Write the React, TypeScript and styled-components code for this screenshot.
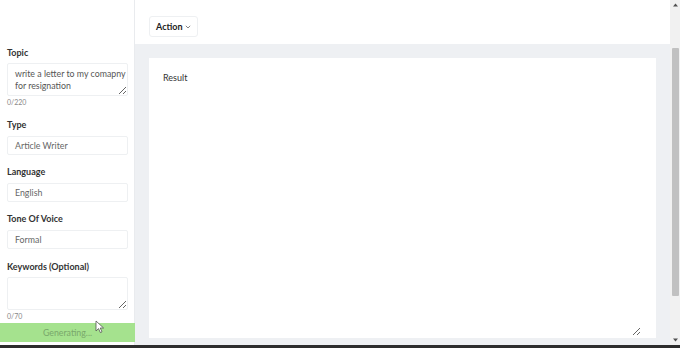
import React from 'react';
import styled, { createGlobalStyle } from 'styled-components';

const GlobalStyle = createGlobalStyle`
  html, body {
    margin: 0;
    padding: 0;
    background: #ffffff;
  }
  body {
    font-family: Lato, 'Open Sans', sans-serif;
    overflow: hidden;
  }
  * {
    box-sizing: border-box;
  }
`;

const Page = styled.div`
  width: 680px;
  height: 348px;
  display: flex;
  flex-direction: column;
  position: relative;
`;

const Body = styled.div`
  flex: 1;
  display: flex;
  min-height: 0;
`;

const BottomEdge = styled.div`
  height: 3px;
  background: #2d2d2d;
`;

const Sidebar = styled.aside`
  width: 135px;
  flex-shrink: 0;
  display: flex;
  flex-direction: column;
  padding-top: 47px;
  background: #ffffff;
  border-right: 1px solid #e9ebee;
`;

const Fields = styled.div`
  padding: 0 7px;
  display: flex;
  flex-direction: column;
`;

const Label = styled.div<{ $gap: number }>`
  margin-top: ${({ $gap }) => $gap}px;
  height: 12px;
  line-height: 12px;
  font-size: 9px;
  font-weight: 700;
  color: #333;
`;

const TextBox = styled.textarea<{ $gap: number }>`
  margin-top: ${({ $gap }) => $gap}px;
  width: 121px;
  height: 33px;
  padding: 4px 0 4px 7px;
  border: 1px solid #eef0f2;
  border-radius: 2px;
  font-family: Lato, 'Open Sans', sans-serif;
  font-size: 8.8px;
  line-height: 12px;
  color: #555;
  resize: vertical;
  outline: none;
  overflow: hidden;
`;

const Select = styled.div`
  margin-top: 5px;
  width: 121px;
  height: 19px;
  padding: 0 7px;
  display: flex;
  align-items: center;
  border: 1px solid #eef0f2;
  border-radius: 2px;
  font-size: 8.8px;
  color: #666;
`;

const Counter = styled.div`
  height: 10px;
  line-height: 10px;
  margin-top: 1px;
  font-size: 7px;
  color: #888;
`;

const GenerateButton = styled.button`
  margin-top: 2px;
  width: 135px;
  height: 19px;
  border: none;
  background: #a5e28e;
  color: #79a86b;
  font-family: Lato, 'Open Sans', sans-serif;
  font-size: 8.8px;
  cursor: progress;
`;

const Main = styled.main`
  flex: 1;
  display: flex;
  flex-direction: column;
  min-width: 0;
`;

const TopBar = styled.div`
  height: 44px;
  display: flex;
  align-items: flex-start;
  padding: 16px 0 0 14px;
  background: #ffffff;
`;

const ActionButton = styled.button`
  height: 21px;
  padding: 0 6px;
  display: flex;
  align-items: center;
  gap: 2px;
  border: 1px solid #eef0f2;
  border-radius: 3px;
  background: #ffffff;
  font-family: Lato, 'Open Sans', sans-serif;
  font-size: 9px;
  font-weight: 700;
  color: #222;
`;

const Content = styled.div`
  flex: 1;
  display: flex;
  padding: 14px 14px 7px;
  background: #eef0f3;
`;

const Card = styled.div`
  flex: 1;
  display: flex;
  padding: 0 15px 2px 0;
  background: #ffffff;
`;

const ResultBox = styled.textarea`
  flex: 1;
  padding: 14px;
  border: none;
  background: #ffffff;
  font-family: Lato, 'Open Sans', sans-serif;
  font-size: 9px;
  resize: vertical;
  outline: none;
  &::placeholder {
    color: #333;
  }
`;

const ScrollTrack = styled.div`
  width: 10px;
  flex-shrink: 0;
  display: flex;
  flex-direction: column;
  align-items: center;
  background: #f1f1f1;
`;

const Arrow = styled.div`
  height: 10px;
  display: flex;
  align-items: center;
  justify-content: center;
`;

const Thumb = styled.div`
  width: 7px;
  height: 248px;
  margin-top: 38px;
  border-radius: 1px;
  background: #c1c1c1;
`;

const Spacer = styled.div`
  flex: 1;
`;

const Cursor = styled.svg`
  position: absolute;
  left: 95px;
  top: 320px;
`;

const Chevron = () => (
  <svg width="6" height="4" viewBox="0 0 6 4">
    <path d="M0.8 0.8 L3 3 L5.2 0.8" fill="none" stroke="#666" strokeWidth="0.8" />
  </svg>
);

const ArrowIcon = ({ down }: { down?: boolean }) => (
  <svg width="5" height="4" viewBox="0 0 5 4">
    <path d={down ? 'M0 0.5 L5 0.5 L2.5 3.5 Z' : 'M0 3.5 L5 3.5 L2.5 0.5 Z'} fill="#505050" />
  </svg>
);

const App: React.FC = () => {
  return (
    <Page>
      <GlobalStyle />
      <Body>
        <Sidebar>
          <Fields>
            <Label $gap={0}>Topic</Label>
            <TextBox $gap={4} defaultValue="write a letter to my comapny for resignation" />
            <Counter>0/220</Counter>
            <Label $gap={12}>Type</Label>
            <Select>Article Writer</Select>
            <Label $gap={11}>Language</Label>
            <Select>English</Select>
            <Label $gap={11}>Tone Of Voice</Label>
            <Select>Formal</Select>
            <Label $gap={12}>Keywords (Optional)</Label>
            <TextBox $gap={4} />
            <Counter>0/70</Counter>
          </Fields>
          <GenerateButton>Generating...</GenerateButton>
        </Sidebar>
        <Main>
          <TopBar>
            <ActionButton>
              Action <Chevron />
            </ActionButton>
          </TopBar>
          <Content>
            <Card>
              <ResultBox placeholder="Result" />
            </Card>
          </Content>
        </Main>
        <ScrollTrack>
          <Arrow>
            <ArrowIcon />
          </Arrow>
          <Thumb />
          <Spacer />
          <Arrow>
            <ArrowIcon down />
          </Arrow>
        </ScrollTrack>
      </Body>
      <BottomEdge />
      <Cursor width="10" height="14" viewBox="0 0 10 14">
        <path d="M1 1 L1 11 L3.5 8.6 L5.4 12.6 L7 11.8 L5.2 8 L8.6 8 Z" fill="#ffffff" stroke="#555" strokeWidth="0.8" />
      </Cursor>
    </Page>
  );
};

export default App;
